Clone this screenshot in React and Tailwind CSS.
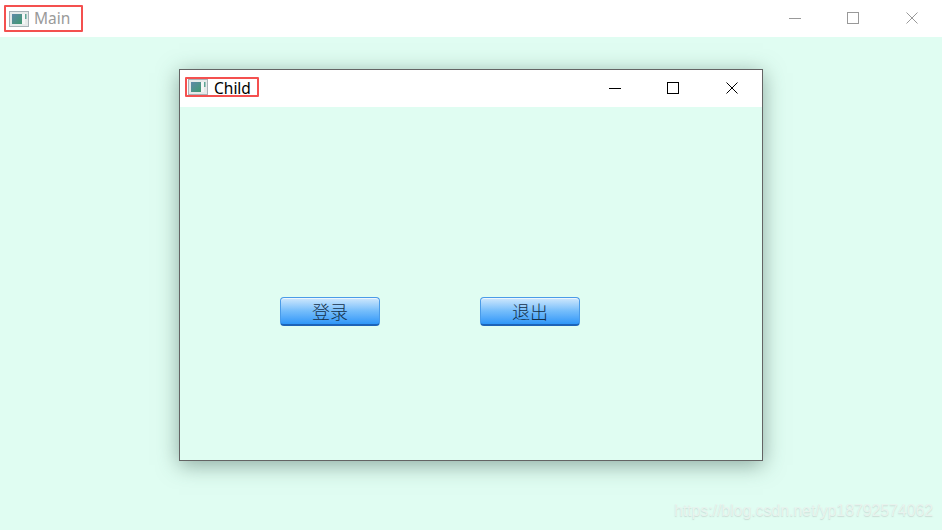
function AppIcon({ id }) {
  return (
    <svg width="20" height="16" viewBox="0 0 20 16" className="block shrink-0">
      <defs>
        <linearGradient id={id} x1="0" y1="0" x2="1" y2="1">
          <stop offset="0" stopColor="#5f88a8" />
          <stop offset="1" stopColor="#3f9a70" />
        </linearGradient>
      </defs>
      <rect x="0.5" y="0.5" width="19" height="15" fill="#e6eaea" stroke="#a9b3b8" />
      <rect x="3" y="3" width="10" height="10" fill={`url(#${id})`} />
      <rect x="13" y="3" width="3" height="10" fill="#f4f6f6" />
      <rect x="16" y="3" width="1.5" height="5" fill="#5fa595" />
    </svg>
  );
}

function WinButtons({ color }) {
  return (
    <div className="flex items-center">
      <svg width="14" height="12" viewBox="0 0 14 12" className="block">
        <line x1="1" y1="6.5" x2="13" y2="6.5" stroke={color} />
      </svg>
      <svg width="12" height="12" viewBox="0 0 12 12" className="block ml-[45px]">
        <rect x="0.5" y="0.5" width="11" height="11" fill="none" stroke={color} />
      </svg>
      <svg width="12" height="12" viewBox="0 0 12 12" className="block ml-[47px]">
        <path d="M0.5 0.5 L11.5 11.5 M11.5 0.5 L0.5 11.5" stroke={color} fill="none" />
      </svg>
    </div>
  );
}

function GelButton({ label }) {
  return (
    <button className="w-[100px] h-[29px] rounded-[4px] border border-[#4a9be8] border-b-2 border-b-[#1c63b8] bg-gradient-to-b from-[#cfe8fc] via-[#74bdfb] to-[#2c96f8] shadow-[inset_0_1px_0_rgba(255,255,255,0.6)] text-[18px] leading-[27px] font-light text-[#14304a] font-['Noto_Sans_CJK_SC',sans-serif] flex items-center justify-center">
      {label}
    </button>
  );
}

export default function App() {
  return (
    <div className="w-[942px] h-[530px] bg-[#e0fdf2] overflow-hidden relative font-['Noto_Sans',sans-serif]">
      <div className="h-[37px] bg-white flex items-center justify-between pl-1 pr-[24px] pb-[2px]">
        <div className="w-[79px] h-[27px] mt-[2px] border-2 border-[#f4504f] rounded-[1px] flex items-center pl-[3px] gap-[5px] text-[15.5px] text-[#9a9a9a]">
          <AppIcon id="icon-main" />
          <span>Main</span>
        </div>
        <WinButtons color="#999999" />
      </div>
      <div className="ml-[179px] mt-[32px] w-[584px] h-[392px] border border-[#646464] bg-[#e0fdf2] shadow-[0_4px_20px_rgba(60,90,80,0.5)]">
        <div className="h-[37px] bg-white flex items-center justify-between pl-[5px] pr-[24px] pb-[2px]">
          <div className="w-[74px] h-[20px] -mt-[2px] border-2 border-[#f4504f] rounded-[1px] flex items-center pl-[1px] gap-[6px] text-[15.5px] text-black">
            <AppIcon id="icon-child" />
            <span className="translate-y-[2px]">Child</span>
          </div>
          <WinButtons color="#000000" />
        </div>
        <div className="flex gap-[100px] pl-[100px] pt-[190px]">
          <GelButton label="登录" />
          <GelButton label="退出" />
        </div>
      </div>
      <div className="absolute right-[9px] bottom-[8px] text-[15.8px] leading-[22px] text-[#e8f3ee] [text-shadow:0_1px_1px_rgba(180,190,185,0.5)] font-['Liberation_Sans',sans-serif]">
        https://blog.csdn.net/yp18792574062
      </div>
    </div>
  );
}
